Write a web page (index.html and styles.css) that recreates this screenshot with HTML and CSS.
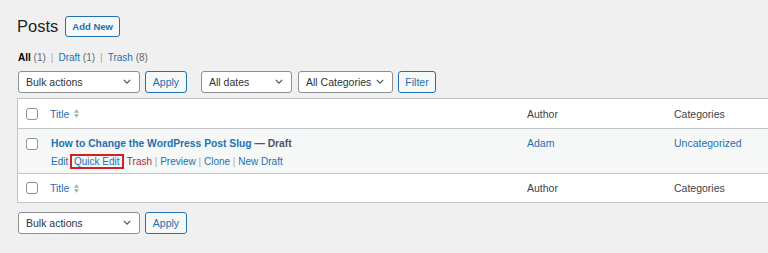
FILE: index.html
```html
<!DOCTYPE html>
<html>
<head>
<meta charset="utf-8">
<link rel="stylesheet" href="styles.css">
</head>
<body>
<div class="wrap">
  <div class="head">
    <h1 class="title">Posts</h1>
    <a class="btn-add">Add New</a>
  </div>
  <ul class="subsub">
    <li><b class="current">All</b> <span class="count">(1)</span></li>
    <li class="sep">|</li>
    <li><a class="link">Draft</a> <span class="count">(1)</span></li>
    <li class="sep">|</li>
    <li><a class="link">Trash</a> <span class="count">(8)</span></li>
  </ul>
  <div class="tablenav">
    <div class="select w-bulk">Bulk actions<svg class="chev" viewBox="0 0 10 6"><path d="M1 1l4 4 4-4" fill="none" stroke="#50575e" stroke-width="1.6"/></svg></div>
    <button class="btn">Apply</button>
    <div class="select w-dates">All dates<svg class="chev" viewBox="0 0 10 6"><path d="M1 1l4 4 4-4" fill="none" stroke="#50575e" stroke-width="1.6"/></svg></div>
    <div class="select w-cats">All Categories<svg class="chev" viewBox="0 0 10 6"><path d="M1 1l4 4 4-4" fill="none" stroke="#50575e" stroke-width="1.6"/></svg></div>
    <button class="btn btn-filter">Filter</button>
  </div>
  <div class="table">
    <div class="row row-head">
      <div class="cell cb"><span class="checkbox"></span></div>
      <div class="cell"><a class="link">Title</a><svg class="sort" viewBox="0 0 6 10"><path d="M3 0L6 4H0z M3 10L0 6H6z" fill="#a7aaad"/></svg></div>
      <div class="cell">Author</div>
      <div class="cell">Categories</div>
    </div>
    <div class="row row-post">
      <div class="cell cb"><span class="checkbox"></span></div>
      <div class="cell col-title">
        <div class="post-title"><a class="link">How to Change the WordPress Post Slug</a> — <span class="state">Draft</span></div>
        <div class="actions"><a class="link">Edit</a> <span class="mark"><a class="link">Quick Edit</a></span><span class="sep">|</span> <a class="trash">Trash</a> <span class="sep">|</span> <a class="link">Preview</a> <span class="sep">|</span> <a class="link">Clone</a> <span class="sep">|</span> <a class="link">New Draft</a></div>
      </div>
      <div class="cell"><a class="link">Adam</a></div>
      <div class="cell"><a class="link">Uncategorized</a></div>
    </div>
    <div class="row row-foot">
      <div class="cell cb"><span class="checkbox"></span></div>
      <div class="cell"><a class="link">Title</a><svg class="sort" viewBox="0 0 6 10"><path d="M3 0L6 4H0z M3 10L0 6H6z" fill="#a7aaad"/></svg></div>
      <div class="cell">Author</div>
      <div class="cell">Categories</div>
    </div>
  </div>
  <div class="tablenav bottom">
    <div class="select w-bulk">Bulk actions<svg class="chev" viewBox="0 0 10 6"><path d="M1 1l4 4 4-4" fill="none" stroke="#50575e" stroke-width="1.6"/></svg></div>
    <button class="btn">Apply</button>
  </div>
</div>
</body>
</html>
```
FILE: styles.css
```css
html, body {
  margin: 0;
  padding: 0;
  background: #f0f0f1;
}
body {
  font-family: "Liberation Sans", Arial, sans-serif;
  font-size: 10.5px;
  color: #3c434a;
  width: 768px;
  height: 253px;
  overflow: hidden;
}
.wrap {
  padding-left: 17px;
}
.head {
  display: flex;
  align-items: center;
  gap: 7px;
  padding-top: 16px;
  height: 21px;
}
.title {
  margin: 0;
  font-weight: 400;
  font-size: 16.5px;
  line-height: 21px;
  color: #1d2327;
}
.btn-add {
  box-sizing: border-box;
  height: 21px;
  line-height: 19px;
  padding: 0 6px;
  border: 1px solid #2271b1;
  border-radius: 3px;
  background: #f6f7f7;
  color: #2271b1;
  font-weight: 700;
  font-size: 9.5px;
}
.link {
  color: #2271b1;
  text-decoration: none;
}
.subsub {
  list-style: none;
  margin: 15px 0 0 1px;
  padding: 0;
  display: flex;
  gap: 5px;
  font-size: 10px;
  line-height: 12px;
  color: #646970;
}
.subsub .current {
  color: #000;
}
.subsub .sep {
  color: #a7aaad;
}
.tablenav {
  display: flex;
  align-items: center;
  margin-top: 6px;
  height: 23px;
}
.tablenav.bottom {
  margin-top: 8px;
}
.select {
  box-sizing: border-box;
  height: 22px;
  border: 1px solid #8c8f94;
  border-radius: 3px;
  background: #fff;
  color: #2c3338;
  display: flex;
  align-items: center;
  justify-content: space-between;
  padding: 0 8px 0 7px;
  font-size: 10.5px;
}
.chev {
  width: 8px;
  height: 5px;
}
.w-bulk { width: 122px; margin-left: 1px; }
.w-dates { width: 91px; margin-left: 14px; }
.w-cats { width: 95px; margin-left: 6px; }
.btn {
  box-sizing: border-box;
  height: 22px;
  width: 42px;
  margin-left: 5px;
  border: 1px solid #2271b1;
  border-radius: 3px;
  background: #f6f7f7;
  color: #2271b1;
  font-family: inherit;
  font-size: 10.5px;
  padding: 0;
}
.btn-filter {
  width: 38px;
}
.table {
  margin-top: 5px;
  width: 760px;
  border: 1px solid #c3c4c7;
  background: #fff;
}
.row {
  display: grid;
  grid-template-columns: 24px 477px 147px 1fr;
  align-items: center;
}
.row-head {
  height: 29px;
  border-bottom: 1px solid #c3c4c7;
}
.row-foot {
  height: 28px;
  border-top: 1px solid #c3c4c7;
}
.row-post {
  height: 44px;
  background: #f6f7f7;
  align-items: start;
}
.cell {
  padding-left: 8px;
  display: flex;
  align-items: center;
  color: #3c434a;
}
.row-post .cell {
  padding-top: 8px;
}
.row-post .cb {
  padding-top: 9px;
}
.checkbox {
  box-sizing: border-box;
  width: 12px;
  height: 12px;
  border: 1px solid #8c8f94;
  border-radius: 3px;
  background: #fff;
}
.sort {
  width: 5px;
  height: 9px;
  margin-left: 5px;
}
.col-title {
  flex-direction: column;
  align-items: flex-start;
  padding-left: 9px;
}
.post-title {
  font-weight: 700;
  font-size: 10.3px;
  line-height: 13px;
  color: #50575e;
}
.post-title .link {
  color: #2271b1;
}
.actions {
  margin-top: 5px;
  font-size: 10px;
  line-height: 13px;
  white-space: pre;
}
.actions .sep {
  color: #a7aaad;
}
.trash {
  color: #b32d2e;
}
.mark {
  outline: 2px solid #d12027;
  outline-offset: 0px;
  padding: 0 2px;
  margin-left: 1px;
}
```
